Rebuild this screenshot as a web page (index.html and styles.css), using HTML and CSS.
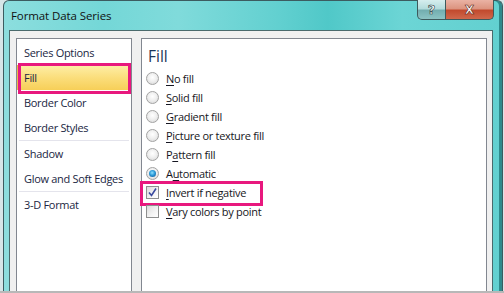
FILE: index.html
```html
<!DOCTYPE html>
<html>
<head>
<meta charset="utf-8">
<link rel="stylesheet" href="styles.css">
</head>
<body>
<div class="screen">
  <div class="window">
    <div class="titlebar">
      <span class="title">Format Data Series</span>
      <div class="caption-btns">
        <div class="cbtn help">?</div>
        <div class="cbtn close">X</div>
      </div>
    </div>
    <div class="client">
      <div class="navlist">
        <div class="item">Series Options</div>
        <div class="item selected">Fill<span class="mark mark-fill"></span></div>
        <div class="item">Border Color</div>
        <div class="item">Border Styles</div>
        <div class="sep"></div>
        <div class="item">Shadow</div>
        <div class="item">Glow and Soft Edges</div>
        <div class="sep"></div>
        <div class="item">3-D Format</div>
      </div>
      <div class="panel">
        <div class="heading">Fill</div>
        <div class="opt"><span class="radio"></span><span class="label"><u>N</u>o fill</span></div>
        <div class="opt"><span class="radio"></span><span class="label"><u>S</u>olid fill</span></div>
        <div class="opt"><span class="radio"></span><span class="label"><u>G</u>radient fill</span></div>
        <div class="opt"><span class="radio"></span><span class="label"><u>P</u>icture or texture fill</span></div>
        <div class="opt"><span class="radio"></span><span class="label">P<u>a</u>ttern fill</span></div>
        <div class="opt"><span class="radio on"></span><span class="label">A<u>u</u>tomatic</span></div>
        <div class="opt marked"><span class="check"><svg width="11" height="11" viewBox="0 0 11 11"><path d="M2 5.5 L4.5 8.5 L9 1.5" fill="none" stroke="#3a4a9e" stroke-width="1.6"/></svg></span><span class="label"><u>I</u>nvert if negative</span><span class="mark mark-invert"></span></div>
        <div class="opt"><span class="check"></span><span class="label"><u>V</u>ary colors by point</span></div>
      </div>
    </div>
  </div>
  <div class="bottom"></div>
</div>
</body>
</html>
```
FILE: styles.css
```css
html, body {
  margin: 0;
  padding: 0;
}
body {
  font-family: "Open Sans", "Noto Sans", sans-serif;
  font-size: 11px;
  letter-spacing: -0.3px;
  color: #1a1a1a;
}
.screen {
  width: 504px;
  height: 293px;
  overflow: hidden;
  background: #d6e6e8;
  display: flex;
  flex-direction: column;
}
.window {
  height: 291px;
  width: 500px;
  margin-left: 3px;
  box-sizing: border-box;
  border: 1px solid #3c5c60;
  border-bottom: none;
  border-radius: 6px 6px 0 0;
  background: linear-gradient(90deg, #8cdede 0%, #74d7d7 20%, #80dbdb 35%, #62d0d0 55%, #50c8c8 65%, #6cd5d5 80%, #62d0d0 100%);
  box-shadow: inset -3px 0 0 #2f8a8c;
  padding: 0 9px 0 5px;
  display: flex;
  flex-direction: column;
}
.titlebar {
  height: 29px;
  flex: none;
  display: flex;
  align-items: flex-start;
}
.title {
  padding: 7px 0 0 2px;
  font-size: 11.5px;
  letter-spacing: -0.1px;
  color: #111;
  line-height: 16px;
}
.caption-btns {
  margin-left: auto;
  margin-top: -1px;
  margin-right: -1px;
  display: flex;
}
.cbtn {
  height: 20px;
  box-sizing: border-box;
  border: 1px solid #3d5a5c;
  border-top: none;
  display: flex;
  align-items: center;
  justify-content: center;
  color: #fff;
  font-family: "DejaVu Sans", sans-serif;
  font-weight: bold;
  font-size: 13px;
  letter-spacing: 0;
  -webkit-text-stroke: 0.6px #2a3a3c;
}
.help {
  width: 29px;
  border-radius: 0 0 0 5px;
  background: linear-gradient(180deg, #d6eeee 0%, #b4dcdc 45%, #73aeb0 55%, #8cc4c4 100%);
}
.close {
  width: 48px;
  border-left: none;
  border-radius: 0 0 5px 0;
  background: linear-gradient(180deg, #eab2a4 0%, #dc9480 45%, #c24a2e 55%, #d0684c 100%);
  -webkit-text-stroke: 0.6px #5a1e12;
  font-size: 12px;
}
.client {
  flex: 1;
  background: #f0f0f0;
  border: 1px solid #4a6a6c;
  border-bottom: none;
  padding: 7px 5px 0 6px;
  display: flex;
  gap: 9px;
}
.navlist {
  width: 116px;
  box-sizing: border-box;
  background: #fff;
  border: 1px solid #828790;
  border-bottom: none;
  padding-top: 1px;
  display: flex;
  flex-direction: column;
}
.item {
  position: relative;
  height: 25px;
  line-height: 25px;
  padding-left: 7px;
  color: #1a2642;
  white-space: nowrap;
}
.item.selected {
  background: linear-gradient(180deg, #feeea8 0%, #fbde7c 50%, #f7cf58 100%);
  box-shadow: inset 2px 0 0 #eeb848;
}
.sep {
  height: 1px;
  margin: 0 2px;
  background: #e4e4ec;
}
.mark {
  position: absolute;
  box-sizing: border-box;
  border: 3px solid #e8187e;
  pointer-events: none;
}
.mark-fill {
  left: 1px;
  top: -2px;
  width: 113px;
  height: 31px;
}
.panel {
  flex: 1;
  background: #fff;
  border: 1px solid #828790;
  border-bottom: none;
  padding: 7px 0 0 4px;
}
.heading {
  font-size: 15.5px;
  letter-spacing: 0;
  line-height: 20px;
  color: #1b3558;
  margin: 0 0 3px 2px;
}
.opt {
  position: relative;
  height: 19px;
  display: flex;
  align-items: center;
  gap: 7px;
}
.label {
  color: #161622;
  white-space: nowrap;
  line-height: 19px;
}
.label u {
  text-underline-offset: 2px;
}
.radio {
  width: 13px;
  height: 13px;
  box-sizing: border-box;
  border-radius: 50%;
  border: 1px solid #a2a2a2;
  background: radial-gradient(circle at 50% 40%, #ffffff 0%, #f0f0f0 45%, #d4d4d4 100%);
  display: flex;
  align-items: center;
  justify-content: center;
  flex: none;
}
.radio.on::after {
  content: "";
  width: 7px;
  height: 7px;
  border-radius: 50%;
  background: radial-gradient(circle at 45% 40%, #8fe0ff 0%, #2a9ad8 45%, #0e4c8a 100%);
}
.check {
  width: 13px;
  height: 13px;
  box-sizing: border-box;
  border: 1px solid #8e8f8f;
  background: linear-gradient(135deg, #dcdcdc 0%, #f4f4f4 60%, #ffffff 100%);
  display: flex;
  align-items: center;
  justify-content: center;
  flex: none;
}
.mark-invert {
  left: -6px;
  top: -2px;
  width: 123px;
  height: 25px;
}
.bottom {
  height: 2px;
  background: #b8b8b8;
  flex: none;
}
```
